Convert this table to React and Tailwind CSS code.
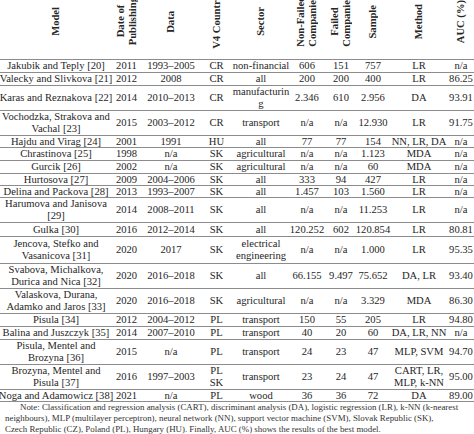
import React from "react";

const widths = [112, 29, 60, 31, 58, 34, 34, 30, 62, 22];

const header = [
  ["Model"],
  ["Date of", "Publishing"],
  ["Data"],
  ["V4 Country"],
  ["Sector"],
  ["Non-Failed", "Companies"],
  ["Failed", "Companies"],
  ["Sample"],
  ["Method"],
  ["AUC (%)"],
];

const rows = [
  [13, ["Jakubik and Teply [20]", "2011", "1993–2005", "CR", "non-financial", "606", "151", "757", "LR", "n/a"]],
  [13, ["Valecky and Slivkova [21]", "2012", "2008", "CR", "all", "200", "200", "400", "LR", "86.25"]],
  [25, ["Karas and Reznakova [22]", "2014", "2010–2013", "CR", ["manufacturin", "g"], "2.346", "610", "2.956", "DA", "93.91"]],
  [25, [["Vochodzka, Strakova and", "Vachal [23]"], "2015", "2003–2012", "CR", "transport", "n/a", "n/a", "12.930", "LR", "91.75"]],
  [12, ["Hajdu and Virag [24]", "2001", "1991", "HU", "all", "77", "77", "154", "NN, LR, DA", "n/a"]],
  [13, ["Chrastinova [25]", "1998", "n/a", "SK", "agricultural", "n/a", "n/a", "1.123", "MDA", "n/a"]],
  [13, ["Gurcik [26]", "2002", "n/a", "SK", "agricultural", "n/a", "n/a", "60", "MDA", "n/a"]],
  [12, ["Hurtosova [27]", "2009", "2004–2006", "SK", "all", "333", "94", "427", "LR", "n/a"]],
  [12, ["Delina and Packova [28]", "2013", "1993–2007", "SK", "all", "1.457", "103", "1.560", "LR", "n/a"]],
  [25, [["Harumova and Janisova", "[29]"], "2014", "2008–2011", "SK", "all", "n/a", "n/a", "11.253", "LR", "n/a"]],
  [14, ["Gulka [30]", "2016", "2012–2014", "SK", "all", "120.252", "602", "120.854", "LR", "80.81"]],
  [27, [["Jencova, Stefko and", "Vasanicova [31]"], "2020", "2017", "SK", ["electrical", "engineering"], "n/a", "n/a", "1.000", "LR", "95.35"]],
  [25, [["Svabova, Michalkova,", "Durica and Nica [32]"], "2020", "2016–2018", "SK", "all", "66.155", "9.497", "75.652", "DA, LR", "93.40"]],
  [25, [["Valaskova, Durana,", "Adamko and Jaros [33]"], "2020", "2016–2018", "SK", "agricultural", "n/a", "n/a", "3.329", "MDA", "86.30"]],
  [13, ["Pisula [34]", "2012", "2004–2012", "PL", "transport", "150", "55", "205", "LR", "94.80"]],
  [13, ["Balina and Juszczyk [35]", "2014", "2007–2010", "PL", "transport", "40", "20", "60", "DA, LR, NN", "n/a"]],
  [25, [["Pisula, Mentel and", "Brozyna [36]"], "2015", "n/a", "PL", "transport", "24", "23", "47", "MLP, SVM", "94.70"]],
  [25, [["Brozyna, Mentel and", "Pisula [37]"], "2016", "1997–2003", ["PL", "SK"], "transport", "23", "24", "47", ["CART, LR,", "MLP, k-NN"], "95.00"]],
  [12, ["Noga and Adamowicz [38]", "2021", "n/a", "PL", "wood", "36", "36", "72", "DA", "89.00"]],
];

function Cell({ w, children }) {
  const lines = Array.isArray(children) ? children : [children];
  return (
    <div className="flex shrink-0 items-center justify-center" style={{ width: w }}>
      <div className="whitespace-nowrap text-center leading-[12px]">
        {lines.map((l, i) => (
          <div key={i}>{l}</div>
        ))}
      </div>
    </div>
  );
}

export default function App() {
  return (
    <div className="h-[434px] w-[474px] overflow-hidden bg-white font-['Liberation_Serif',serif] text-[10.6px] text-[#262626]">
      <div className="flex h-[60px] border-b border-[#8c8c8c]">
        {header.map((h, i) => (
          <div key={i} className="flex shrink-0 items-center justify-center pb-[16px]" style={{ width: widths[i] }}>
            <div className="rotate-180 whitespace-nowrap text-center font-bold leading-[12px] [writing-mode:vertical-rl]">
              {h.map((l, j) => (
                <div key={j}>{l}</div>
              ))}
            </div>
          </div>
        ))}
      </div>
      {rows.map(([h, cells], r) => (
        <div key={r} className="flex border-b border-[#8c8c8c]" style={{ height: h }}>
          {cells.map((c, i) => (
            <Cell key={i} w={widths[i]}>
              {c}
            </Cell>
          ))}
        </div>
      ))}
      <div className="whitespace-nowrap pl-[5px] pt-[0px] text-[8.9px] leading-[11px] text-[#333] [text-indent:15px]">
        Note: Classification and regression analysis (CART), discriminant analysis (DA), logistic regression (LR), k-NN (k-nearest
        <br />
        neighbours), MLP (multilayer perceptron), neural network (NN), support vector machine (SVM), Slovak Republic (SK),
        <br />
        Czech Republic (CZ), Poland (PL), Hungary (HU). Finally, AUC (%) shows the results of the best model.
      </div>
    </div>
  );
}
